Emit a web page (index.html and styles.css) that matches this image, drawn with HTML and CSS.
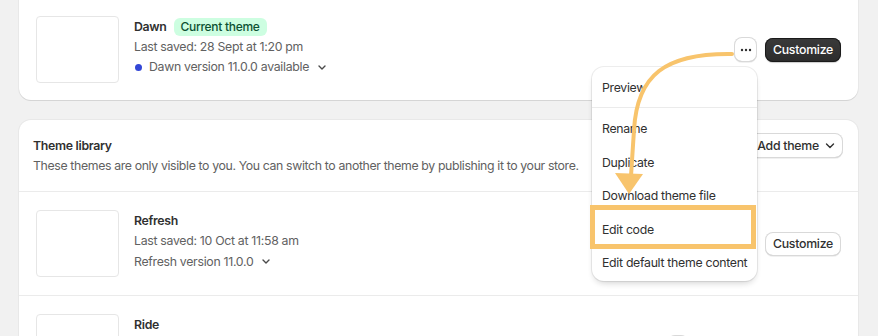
FILE: index.html
```html
<!DOCTYPE html>
<html lang="en">
<head>
<meta charset="utf-8">
<title>Themes</title>
<link rel="stylesheet" href="styles.css">
</head>
<body>
<div class="page">
  <section class="card card-current">
    <div class="theme-row">
      <div class="thumb"></div>
      <div class="info">
        <div class="title-line"><span class="name">Dawn</span><span class="badge">Current theme</span></div>
        <div class="meta">Last saved: 28 Sept at 1:20 pm</div>
        <div class="meta version"><span class="dot"></span><span>Dawn version 11.0.0 available</span><svg class="chev" width="8" height="5" viewBox="0 0 8 5"><polyline points="1,1 4,4 7,1" fill="none" stroke="#4a4a4a" stroke-width="1.4" stroke-linecap="round" stroke-linejoin="round"/></svg></div>
      </div>
      <div class="actions">
        <div class="menu-wrap">
          <button class="btn btn-icon" aria-label="More actions"><svg width="12" height="4" viewBox="0 0 12 4"><circle cx="2" cy="2" r="1.2" fill="#303030"/><circle cx="6" cy="2" r="1.2" fill="#303030"/><circle cx="10" cy="2" r="1.2" fill="#303030"/></svg></button>
          <div class="menu">
            <div class="menu-section first">
              <div class="menu-item">Preview</div>
            </div>
            <div class="menu-section second">
              <div class="menu-item">Rename</div>
              <div class="menu-item">Duplicate</div>
              <div class="menu-item">Download theme file</div>
              <div class="menu-item">Edit code</div>
              <div class="menu-item">Edit default theme content</div>
            </div>
          </div>
        </div>
        <button class="btn btn-primary">Customize</button>
      </div>
    </div>
  </section>

  <section class="card library">
    <div class="lib-head">
      <div class="lib-text">
        <h2 class="lib-title">Theme library</h2>
        <p class="lib-desc">These themes are only visible to you. You can switch to another theme by publishing it to your store.</p>
      </div>
      <button class="btn btn-disclosure">Add theme<svg class="chev-btn" width="10" height="6" viewBox="0 0 10 6"><polyline points="1.5,1 5,4.5 8.5,1" fill="none" stroke="#303030" stroke-width="1.4" stroke-linecap="round" stroke-linejoin="round"/></svg></button>
    </div>
    <div class="theme-row lib-row">
      <div class="thumb"></div>
      <div class="info">
        <div class="title-line"><span class="name">Refresh</span></div>
        <div class="meta">Last saved: 10 Oct at 11:58 am</div>
        <div class="meta version"><span>Refresh version 11.0.0</span><svg class="chev" width="8" height="5" viewBox="0 0 8 5"><polyline points="1,1 4,4 7,1" fill="none" stroke="#4a4a4a" stroke-width="1.4" stroke-linecap="round" stroke-linejoin="round"/></svg></div>
      </div>
      <div class="actions">
        <button class="btn btn-secondary">Customize</button>
      </div>
    </div>
    <div class="theme-row lib-row">
      <div class="thumb"></div>
      <div class="info">
        <div class="title-line"><span class="name">Ride</span></div>
        <div class="meta">Last saved: 10 Oct at 11:52 am</div>
        <div class="meta version"><span>Ride version 11.0.0</span></div>
      </div>
      <div class="actions ride-actions">
        <button class="btn btn-small" aria-label="More actions">…</button>
        <button class="btn btn-secondary btn-publish">Publish</button>
        <button class="btn btn-secondary btn-cust">Customize</button>
      </div>
    </div>
  </section>

  <svg class="annotation" width="878" height="336" viewBox="0 0 878 336" aria-hidden="true">
    <path d="M732,54 C665,53 637,75 634,130 L631,176" fill="none" stroke="#f8c46c" stroke-width="4" stroke-linecap="round"/>
    <polygon points="615,173 643,174 629,194" fill="#f8c46c"/>
    <rect x="592.5" y="207.5" width="161" height="39" fill="none" stroke="#f8c46c" stroke-width="5"/>
  </svg>
</div>
</body>
</html>
```

FILE: styles.css
```css
* { box-sizing: border-box; }

html, body {
  margin: 0;
  padding: 0;
  background: #f1f1f1;
  width: 878px;
  height: 336px;
  overflow: hidden;
}

body {
  font-family: Inter, "Liberation Sans", sans-serif;
  font-size: 12.3px;
  letter-spacing: -0.3px;
  color: #303030;
}

.page {
  position: relative;
  width: 878px;
  height: 336px;
  padding: 0 20px 0 19px;
  display: flex;
  flex-direction: column;
  gap: 20px;
}

.card {
  background: #fff;
  border-radius: 12px;
  box-shadow: 0 1px 0 0 rgba(26, 26, 26, 0.09), 0 0 0 1px rgba(26, 26, 26, 0.04);
  flex-shrink: 0;
}

.card-current {
  border-radius: 0 0 12px 12px;
}

.theme-row {
  display: flex;
  align-items: center;
  padding: 16px 17px 17px 17px;
}

.lib-row {
  padding: 18px 17px 18px 17px;
  border-top: 1px solid #ebebeb;
}

.thumb {
  width: 83px;
  height: 67px;
  border: 1px solid #e6e6e6;
  border-radius: 4px;
  flex-shrink: 0;
  align-self: flex-start;
}

.info {
  flex: 1;
  margin-left: 15px;
  align-self: flex-start;
  line-height: 20px;
  padding-top: 1px;
}

.title-line {
  display: flex;
  align-items: center;
  gap: 7px;
  height: 20px;
}

.name {
  font-weight: 600;
  color: #303030;
}

.badge {
  background: #cdfee1;
  color: #0c5132;
  font-weight: 550;
  font-size: 12px;
  letter-spacing: -0.3px;
  height: 18px;
  line-height: 18px;
  padding: 0 7px;
  border-radius: 6px;
}

.meta {
  color: #616161;
  height: 20px;
  display: flex;
  align-items: center;
}

.lib-row .meta { height: 20.5px; }

.version .dot {
  width: 7px;
  height: 7px;
  border-radius: 50%;
  background: #3347d6;
  margin: 0 7px 0 1px;
}

.version .chev {
  margin-left: 9px;
}

.actions {
  display: flex;
  align-items: center;
  gap: 8px;
}

.btn {
  font-family: inherit;
  font-size: 12.3px;
  letter-spacing: -0.25px;
  font-weight: 500;
  color: #303030;
  background: #fff;
  border: 0;
  border-radius: 8px;
  height: 25px;
  padding: 0 11px;
  box-shadow: 0 0 0 1px #d9d9d9 inset, 0 -1px 0 0 #cccccc inset, 0 1px 0 0 rgba(0, 0, 0, 0.06);
  display: inline-flex;
  align-items: center;
  justify-content: center;
  cursor: pointer;
}

.btn-icon {
  width: 23px;
  padding: 0;
}

.btn-primary {
  background: linear-gradient(#3a3a3a, #2c2c2c);
  color: #fff;
  width: 76px;
  height: 24px;
  padding: 0;
  box-shadow: 0 0 0 1px #1a1a1a inset, 0 1px 0 0 rgba(255, 255, 255, 0.18) inset, 0 1px 1px rgba(0, 0, 0, 0.2);
}

.btn-secondary {
  width: 76px;
  padding: 0;
  height: 24px;
}

.menu-wrap {
  position: relative;
  display: flex;
}

.menu {
  position: absolute;
  top: 30px;
  right: 0;
  width: 165px;
  background: #fff;
  border-radius: 12px;
  box-shadow: 0 0 0 1px rgba(26, 26, 26, 0.08), 0 4px 6px -2px rgba(26, 26, 26, 0.2);
  z-index: 5;
}

.menu-section.first {
  padding: 4px 0 2.5px;
  border-bottom: 1px solid #ebebeb;
}

.menu-section.second {
  padding: 4px 0 1.5px;
}

.menu-item {
  height: 33.5px;
  display: flex;
  align-items: center;
  padding: 0 10px;
  color: #303030;
  white-space: nowrap;
}

.lib-head {
  display: flex;
  align-items: flex-start;
  justify-content: space-between;
  padding: 16px 15px 15px 14px;
}

.lib-title {
  margin: 0;
  font-size: 12.3px;
  font-weight: 600;
  line-height: 20px;
}

.lib-desc {
  margin: 0;
  line-height: 20px;
  color: #616161;
  letter-spacing: -0.36px;
}

.btn-disclosure {
  margin-top: -3px;
  height: 25px;
  padding: 0 8px 0 14px;
  gap: 4px;
}

.chev-btn { margin-left: 2px; }

.ride-actions {
  gap: 11px;
  margin-right: 2px;
}

.btn-small {
  width: 22px;
  padding: 0;
}

.btn-publish { width: 56px; }
.btn-cust { width: 72px; }

.annotation {
  position: absolute;
  left: 0;
  top: 0;
  pointer-events: none;
  z-index: 10;
}
```
